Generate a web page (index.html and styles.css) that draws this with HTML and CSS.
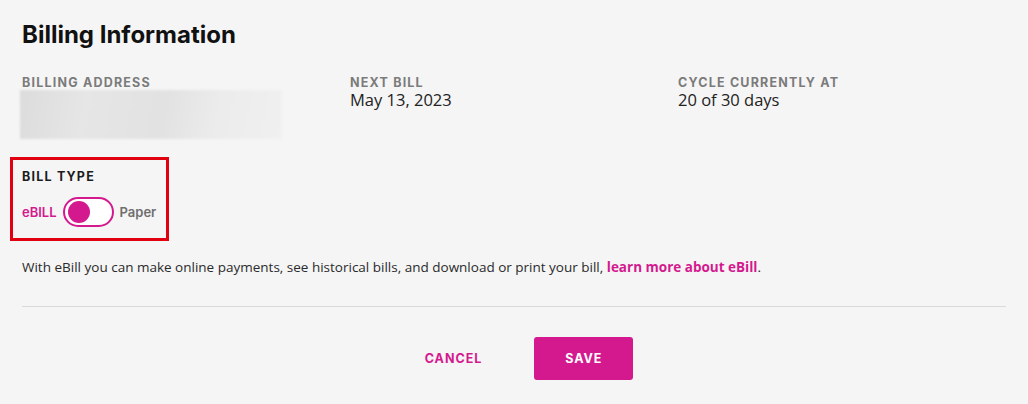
FILE: index.html
```html
<!DOCTYPE html>
<html lang="en">
<head>
<meta charset="utf-8">
<title>Billing Information</title>
<link rel="stylesheet" href="styles.css">
</head>
<body>
<main class="page">
  <h1 class="title">Billing Information</h1>
  <section class="info-grid">
    <div class="info-col">
      <div class="label">BILLING ADDRESS</div>
      <div class="address-blur"></div>
    </div>
    <div class="info-col">
      <div class="label">NEXT BILL</div>
      <div class="value">May 13, 2023</div>
    </div>
    <div class="info-col">
      <div class="label">CYCLE CURRENTLY AT</div>
      <div class="value">20 of 30 days</div>
    </div>
  </section>
  <section class="bill-type">
    <div class="bill-type-label">BILL TYPE</div>
    <div class="toggle-row">
      <span class="opt opt-active">eBILL</span>
      <span class="toggle"><span class="knob"></span></span>
      <span class="opt opt-inactive">Paper</span>
    </div>
  </section>
  <p class="note">With eBill you can make online payments, see historical bills, and download or print your bill, <a class="link" href="#">learn more about eBill</a>.</p>
  <hr class="divider">
  <div class="actions">
    <button class="btn-cancel" type="button">CANCEL</button>
    <button class="btn-save" type="button">SAVE</button>
  </div>
</main>
</body>
</html>
```

FILE: styles.css
```css
html, body {
  margin: 0;
  padding: 0;
  background: #f5f5f5;
}
body {
  font-family: "Open Sans", "Liberation Sans", sans-serif;
  color: #222;
}
.page {
  padding: 21px 22px 0 22px;
}
.title {
  font-family: "Inter", "DejaVu Sans", sans-serif;
  font-weight: 700;
  font-size: 24px;
  line-height: 28px;
  margin: 0 0 27px 0;
  color: #111;
}
.info-grid {
  display: grid;
  grid-template-columns: 328px 328px 1fr;
}
.label {
  font-family: "Inter", "DejaVu Sans", sans-serif;
  font-weight: 700;
  font-size: 12.5px;
  letter-spacing: 1.2px;
  line-height: 14px;
  color: #7b7b7b;
}
.value {
  font-size: 16.5px;
  line-height: 20px;
  color: #222;
}
.address-blur {
  margin-left: -2px;
  width: 262px;
  height: 49px;
  background: linear-gradient(100deg, #dcdcdc 0%, #e6e6e6 25%, #e2e2e2 55%, #ececec 75%, #f0f0f0 100%);
  filter: blur(1px);
}
.bill-type {
  display: inline-block;
  margin: 18px 0 0 -12px;
  padding: 10px 10px 11px 9px;
  border: 3px solid #e10010;
}
.bill-type-label {
  font-family: "Inter", "DejaVu Sans", sans-serif;
  font-weight: 700;
  font-size: 12.5px;
  letter-spacing: 1.2px;
  line-height: 14px;
  color: #1c1c1c;
}
.toggle-row {
  display: flex;
  align-items: center;
  gap: 6px;
  margin-top: 13px;
}
.opt {
  font-family: "Inter", "DejaVu Sans", sans-serif;
  font-weight: 600;
  font-size: 13px;
}
.opt-active { color: #d4198f; }
.opt-inactive { color: #6f6f6f; }
.toggle {
  box-sizing: border-box;
  width: 51px;
  height: 30px;
  border: 2px solid #d4198f;
  border-radius: 15px;
  background: #fff;
  display: flex;
  align-items: center;
  padding-left: 3px;
}
.knob {
  width: 22px;
  height: 22px;
  border-radius: 50%;
  background: #d4198f;
}
.note {
  margin: 17px 0 0 0;
  font-size: 13.5px;
  line-height: 18px;
  color: #2a2a2a;
}
.link {
  color: #d4198f;
  font-weight: 700;
  text-decoration: none;
}
.divider {
  border: 0;
  border-top: 1px solid #dadada;
  margin: 30px 0 0 0;
}
.actions {
  display: flex;
  justify-content: center;
  align-items: center;
  gap: 52px;
  margin-top: 30px;
  padding-left: 30px;
}
.btn-cancel, .btn-save {
  font-family: "Inter", "DejaVu Sans", sans-serif;
  font-weight: 700;
  font-size: 12.5px;
  letter-spacing: 1px;
  border: 0;
  cursor: pointer;
}
.btn-cancel {
  background: transparent;
  color: #d4198f;
  padding: 0;
}
.btn-save {
  background: #d4198f;
  color: #fff;
  width: 99px;
  height: 43px;
  border-radius: 3px;
}
```
